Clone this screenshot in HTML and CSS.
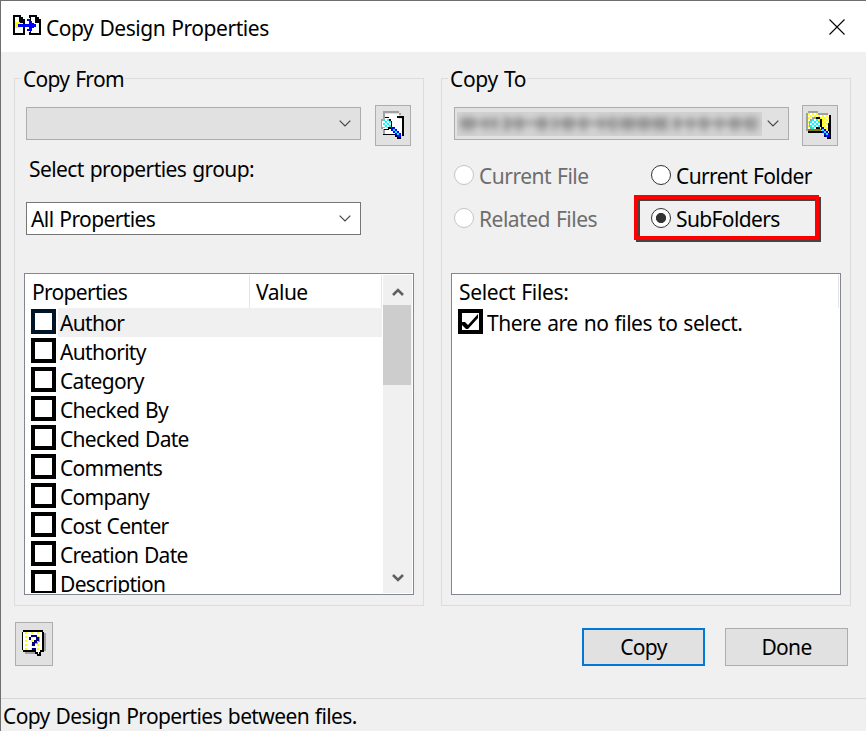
FILE: index.html
```
<!DOCTYPE html>
<html lang="en">
<head>
<meta charset="utf-8">
<title>Copy Design Properties</title>
<link rel="stylesheet" href="styles.css">
</head>
<body>
<div class="window">
  <header class="titlebar">
    <svg class="app-icon" width="28" height="20" shape-rendering="crispEdges">
      <path fill="#fff" d="M2 2h6v4h3v12H2zM18 2h6v4h3v12h-9z"/>
      <path fill="#000" d="M0 0h8v2h2v2h2v16H0zM2 2v16h8V8H6V2zM16 0h8v2h2v2h2v16H16zM18 2v16h8V8h-4V2z" fill-rule="evenodd"/>
      <path fill="#ff0" d="M2 7h5v6H2z"/>
      <path fill="#fff" d="M14 3h3v14h-3z"/>
      <path fill="#00f" d="M5 9h11V6h3v2h2v1h2v3h-2v1h-2v3h-3v-4H5z"/>
      <path fill="#00f" d="M14 4h3v2h-3zM14 14h3v2h-3z"/>
    </svg>
    <h1 class="title">Copy Design Properties</h1>
    <svg class="close" width="16" height="16"><path d="M.5 .5l15 15M15.5 .5l-15 15" stroke="#000" stroke-width="1.1"/></svg>
  </header>

  <main class="groups">
    <section class="group">
      <h2 class="legend">Copy From</h2>
      <div class="picker picker-from">
        <div class="combo disabled"><svg class="chev" width="12" height="7"><path d="M.7 .7L6 6L11.3 .7" fill="none" stroke="#444" stroke-width="1.2"/></svg></div>
        <button class="tool" aria-label="Browse file">
          <svg width="24" height="29" shape-rendering="crispEdges">
            <path fill="#fff" d="M4 3h14v5h3v16H4z"/>
            <path fill="#a0a0a0" d="M2 0h16v2H4v7H2zM18 2h2v2h-2zM2 18h2v6H2z"/>
            <path fill="#000" d="M16 5h7v2h-7zM21 5h2v20h-2zM2 23h16v1H2z"/>
            <path fill="#fff" d="M2 8h6v2h2v6H8v2H2v-2H0v-6h2z"/>
            <path fill="#a0a0a0" d="M0 8h2v2H0zM-1 10h2v6h-2zM0 16h2v2H0z"/>
            <path fill="#0ff" d="M2 8h2v2H2zM6 8h2v2H6zM4 10h2v2H4zM8 10h2v2H8zM2 12h2v2H2zM6 12h2v2H6zM4 14h2v2H4zM8 14h2v2H8zM2 16h2v1H2zM6 16h2v1H6z"/>
            <path fill="#000" d="M4 6h4v1H4zM8 8h2v2H8zM10 10h1v7h-1zM7 16h3v2H7zM3 18h5v1H3z"/>
            <path fill="#00f" d="M10 16h4v2h2v2h2v2h2v4h-4v-2h-2v-2h-2v-2h-2z"/>
            <path fill="#0ff" d="M12 18h2v2h-2zM14 20h2v2h-2zM16 22h2v2h-2z"/>
            <path fill="#000" d="M16 26h4v2h-4zM14 24h2v2h-2z"/>
          </svg>
        </button>
      </div>
      <div class="label">Select properties group:</div>
      <div class="combo combo-group"><span class="value">All Properties</span><svg class="chev" width="12" height="7"><path d="M.7 .7L6 6L11.3 .7" fill="none" stroke="#444" stroke-width="1.2"/></svg></div>
      <div class="list">
        <div class="list-main">
          <div class="head"><span class="col col-name">Properties</span><span class="col col-value">Value</span></div>
          <div class="row current"><i class="box"></i><span class="name">Author</span></div>
          <div class="row"><i class="box"></i><span class="name">Authority</span></div>
          <div class="row"><i class="box"></i><span class="name">Category</span></div>
          <div class="row"><i class="box"></i><span class="name">Checked By</span></div>
          <div class="row"><i class="box"></i><span class="name">Checked Date</span></div>
          <div class="row"><i class="box"></i><span class="name">Comments</span></div>
          <div class="row"><i class="box"></i><span class="name">Company</span></div>
          <div class="row"><i class="box"></i><span class="name">Cost Center</span></div>
          <div class="row"><i class="box"></i><span class="name">Creation Date</span></div>
          <div class="row"><i class="box"></i><span class="name">Description</span></div>
        </div>
        <div class="scrollbar">
          <svg class="arrow" width="12" height="30"><path d="M1 20L6 15L11 20" fill="none" stroke="#606060" stroke-width="2.6"/></svg>
          <div class="thumb"></div>
          <svg class="arrow arrow-down" width="12" height="30"><path d="M1 12L6 17L11 12" fill="none" stroke="#606060" stroke-width="2.6"/></svg>
        </div>
      </div>
    </section>

    <section class="group">
      <h2 class="legend legend-to">Copy To</h2>
      <div class="picker picker-to">
        <div class="combo disabled">
          <svg class="redacted" width="305" height="24">
            <rect width="305" height="24" fill="#d3d3d3"/>
            <g class="smudge" fill="none" stroke="#6c6c6c">
              <path stroke-width="15" stroke-opacity=".4" stroke-dasharray="14 8 5 4 5 5 9 4 8 14 10 5 5 5 12 6 7 12 5 4 10 3 14 3 12 3 16 5 6 8 5 7 8 9 5 8 10 5 12 9" d="M4 12h296"/>
              <path stroke-width="5" stroke-opacity=".5" stroke-dasharray="40 7 44 3 60 5 48 6 80 4" d="M2 11h300"/>
            </g>
          </svg>
          <svg class="chev" width="12" height="7"><path d="M.7 .7L6 6L11.3 .7" fill="none" stroke="#444" stroke-width="1.2"/></svg>
        </div>
        <button class="tool" aria-label="Browse folder">
          <svg width="26" height="29" shape-rendering="crispEdges">
            <defs><pattern id="dither" width="4" height="4" patternUnits="userSpaceOnUse"><path fill="#fff" d="M0 0h4v4H0z"/><path fill="#ff0" d="M0 0h2v2H0zM2 2h2v2H2z"/></pattern></defs>
            <path fill="url(#dither)" d="M2 3h2V1h8v2h2v1h9v14H2z"/>
            <path fill="#ff0" d="M14 6h6v12h-6z" opacity=".5"/>
            <path fill="#a0a0a0" d="M2 0h10v2H2zM12 2h10v2H12zM0 2h2v18H0z"/>
            <path fill="#000" d="M23 4h2v22h-2v-6h-1zM2 20h14v2H2z"/>
            <path fill="#808000" d="M2 18h13v2H2z"/>
            <path fill="#fff" d="M6 8h6v2h2v6h-2v2H6v-2H4v-6h2z"/>
            <path fill="#a0a0a0" d="M6 6h4v2H6zM4 8h2v2H4zM3 10h1v6H3zM4 16h2v2H4z"/>
            <path fill="#0ff" d="M6 8h2v2H6zM10 8h2v2h-2zM8 10h2v2H8zM12 10h2v2h-2zM6 12h2v2H6zM10 12h2v2h-2zM4 10h2v2H4zM4 14h2v2H4zM8 14h2v2H8zM12 14h2v2h-2zM6 16h2v2H6z"/>
            <path fill="#000" d="M10 6h4v2h-4zM14 8h2v8h-2zM10 16h4v2h-4z"/>
            <path fill="#00f" d="M15 16h3v2h2v2h2v2h2v4h-4v-2h-2v-2h-2v-3h-1z"/>
            <path fill="#0ff" d="M16 18h2v2h-2zM18 20h2v2h-2zM20 22h2v2h-2z"/>
            <path fill="#000" d="M21 26h4v2h-4zM18 24h2v2h-2z"/>
          </svg>
        </button>
      </div>
      <div class="radios">
        <label class="radio off"><i class="dot"></i>Current File</label>
        <label class="radio"><i class="dot"></i>Current Folder</label>
        <label class="radio off"><i class="dot"></i>Related Files</label>
        <label class="radio marked"><i class="dot checked"></i>SubFolders</label>
      </div>
      <div class="list list-files">
        <div class="list-main">
          <div class="head"><span class="col col-files">Select Files:</span></div>
          <div class="row"><i class="box"><svg width="17" height="17"><path d="M0 9h3l3 3L16 1v4L6 16H4L0 12z" fill="#000"/></svg></i><span class="name wide">There are no files to select.</span></div>
        </div>
      </div>
    </section>
  </main>

  <div class="actions">
    <button class="tool help" aria-label="Help">
      <svg width="24" height="26" shape-rendering="crispEdges">
        <defs><pattern id="dots" width="6" height="4" patternUnits="userSpaceOnUse"><path fill="#fff" d="M0 0h6v4H0z"/><path fill="#ff0" d="M3 2h2v2H3z"/></pattern></defs>
        <path fill="#a0a0a0" d="M20 3h4v18h-4zM3 22h12v2H3z"/>
        <path fill="#000" d="M1 0h20v2h1v20h-3v4h-4v-2h-2v-2H1z"/>
        <path fill="url(#dots)" d="M1 2h19v18H1z"/>
        <path fill="#000" d="M0 2h1v18H0z"/>
        <path fill="#fff" d="M14 20h4v2h-1v2h-1v-2h-2z"/>
        <path fill="#a0a0a0" d="M16 7h2v5h-2zM12 12h4v2h-4z"/>
        <path fill="#000080" d="M9 5h6v2h2v4h-2v2h-2v3h-3v-4h2v-2h2V7H9v3H7V7h2zM10 18h4v2h-4z"/>
      </svg>
    </button>
    <button class="push default">Copy</button>
    <button class="push">Done</button>
  </div>
  <footer class="status">Copy Design Properties between files.</footer>
</div>
</body>
</html>
```
FILE: styles.css
```
*, *::after { box-sizing: border-box; }

body {
  margin: 0;
  background: #f0f0f0;
  color: #000;
  font: 21px/28px "Noto Sans", "Open Sans", sans-serif;
  letter-spacing: -0.7px;
  word-spacing: 1px;
  white-space: nowrap;
}

svg { display: block; flex: none; }

button {
  margin: 0;
  padding: 0;
  font: inherit;
  letter-spacing: inherit;
  color: inherit;
  background: #e1e1e1;
  border: 1px solid #adadad;
}

.window {
  height: 731px;
  overflow: hidden;
  border: solid #6e6e6e;
  border-width: 1px 0 0 1px;
  background: #f0f0f0;
}

.titlebar {
  display: flex;
  align-items: flex-start;
  height: 51px;
  padding: 13px 21px 0 12px;
  background: #fff;
}
.app-icon { margin-top: 1px; }
.title {
  margin: 0 0 0 5px;
  font-size: 21px;
  font-weight: 400;
  letter-spacing: -0.45px;
  flex: 1;
}
.close { margin-top: 5px; }

.groups {
  display: flex;
  gap: 17px;
  padding: 26px 0 0 13px;
}
.group {
  width: 410px;
  height: 528px;
  border: 1px solid #dcdcdc;
}
.legend {
  width: fit-content;
  margin: -14px 0 0 6px;
  padding: 0 1px 0 2px;
  background: #f0f0f0;
  font-size: 21px;
  font-weight: 400;
}
.legend-to { letter-spacing: -0.35px; }

.picker { display: flex; align-items: flex-start; margin-top: 12px; }
.picker-from { margin-left: 11px; gap: 14px; }
.picker-to { margin-left: 12px; gap: 13px; }
.picker .combo { margin-top: 2px; }

.combo {
  display: flex;
  align-items: center;
  width: 335px;
  height: 33px;
  padding: 0 9px 0 4px;
  border: 1px solid #767676;
  background: #fff;
}
.combo.disabled { padding-left: 2px; border-color: #adadad; background: #e1e1e1; }
.value { letter-spacing: -0.6px; }
.chev { margin-left: auto; }
.redacted { overflow: hidden; }
.smudge { filter: blur(3px); }

.tool {
  display: flex;
  align-items: flex-start;
  width: 36px;
  height: 41px;
  padding: 5px 0 0 5px;
}
.picker-to .tool { padding-left: 3px; }

.label { margin: 9px 0 0 14px; letter-spacing: -0.57px; }
.combo-group { margin: 19px 0 0 11px; }

.list {
  display: flex;
  width: 390px;
  height: 322px;
  margin: 38px 0 0 9px;
  padding: 1px;
  border: 1px solid #828790;
  background: #fff;
}
.list-main { flex: 1; overflow: hidden; }
.head { display: flex; height: 33px; line-height: 34px; }
.col { padding-left: 6px; border-right: 1px solid #e5e5e5; }
.col-name { width: 224px; }
.col-value { width: 132px; letter-spacing: -0.5px; }
.col-files { width: 386px; letter-spacing: -0.35px; }
.row { display: flex; height: 29px; line-height: 30px; padding: 1px 0 0 5px; }
.row .name { flex: 1; height: 29px; margin: -1px 1px 0 2px; padding-left: 2px; }
.row.current .name { background: #f0f0f0; }
.row.current .box { border-color: #001428; }
.row .wide { letter-spacing: -0.47px; }
.box { flex: none; width: 25px; height: 25px; border: 4px solid #000; background: #fff; }

.scrollbar {
  display: flex;
  flex-direction: column;
  width: 29px;
  background: #f0f0f0;
}
.arrow { margin-left: 9px; }
.arrow-down { margin-top: auto; }
.thumb { width: 28px; height: 80px; background: #cdcdcd; }

.radios {
  display: grid;
  grid-template-columns: 197px 1fr;
  row-gap: 15px;
  margin: 16px 0 0 12px;
}
.radio { display: flex; align-items: center; letter-spacing: -0.63px; }
.radio.off { color: #6d6d6d; letter-spacing: -0.5px; }
.dot {
  display: flex;
  width: 20px;
  height: 20px;
  margin: 0 5px 2px 0;
  border: 1px solid #333;
  border-radius: 50%;
  background: #fff;
}
.off .dot { border-color: #c4c4c4; }
.dot.checked { background: radial-gradient(circle, #333 4.7px, #fff 5.4px); }
.marked { position: relative; }
.marked::after {
  content: "";
  position: absolute;
  left: -17px;
  top: -10px;
  width: 185px;
  height: 45px;
  border: 4px solid #ff0000;
  box-shadow: 2px 2px 0 #444, inset 2px 2px 0 #444;
}
.list-files { margin-top: 40px; }

.actions {
  display: flex;
  align-items: flex-end;
  gap: 20px;
  padding: 16px 18px 0 14px;
}
.help { height: 44px; width: 38px; padding: 7px 0 0 6px; margin-right: auto; }
.push { width: 123px; height: 38px; }
.push.default { border: 2px solid #0078d7; }

.status {
  height: 33px;
  margin-top: 32px;
  padding: 3px 0 0 2px;
  border-top: 1px solid #d7d7d7;
  letter-spacing: -0.62px;
}
```
